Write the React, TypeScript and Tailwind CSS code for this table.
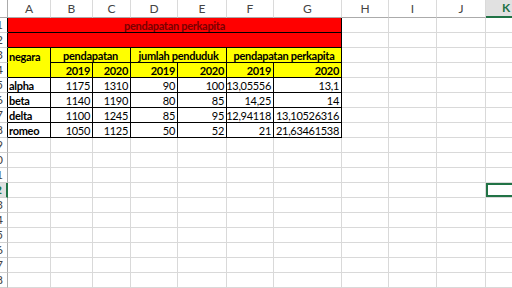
import React from "react";

type C = { t?: string; span?: 1 | 2 | 7; cls: string };

const G = "border-r border-b border-[#d9d9d9] bg-white";
const K = "border-r border-b border-black";
const Y = "bg-[#ffff00]";

function tableRow(r: number): C[] {
  if (r === 1)
    return [{ t: "pendapatan perkapita", span: 7, cls: `${K} bg-[#ff0000] justify-center font-bold text-[#7a0000]` }];
  if (r === 2) return [{ span: 7, cls: `${K} bg-[#ff0000]` }];
  if (r === 3)
    return [
      { t: "negara", cls: `border-r border-black ${Y} justify-start pl-[1px] font-bold` },
      { t: "pendapatan", span: 2, cls: `${K} ${Y} justify-center font-bold` },
      { t: "jumlah penduduk", span: 2, cls: `${K} ${Y} justify-center font-bold` },
      { t: "pendapatan perkapita", span: 2, cls: `${K} ${Y} justify-center font-bold` },
    ];
  if (r === 4)
    return [
      { cls: `${K} ${Y}` },
      ...["2019", "2020", "2019", "2020", "2019", "2020"].map((t) => ({
        t,
        cls: `${K} ${Y} justify-end pr-[2px] font-bold`,
      })),
    ];
  const data: string[][] = [
    ["alpha", "1175", "1310", "90", "100", "13,05556", "13,1"],
    ["beta", "1140", "1190", "80", "85", "14,25", "14"],
    ["delta", "1100", "1245", "85", "95", "12,94118", "13,10526316"],
    ["romeo", "1050", "1125", "50", "52", "21", "21,63461538"],
  ];
  const d = data[r - 5];
  return d.map((t, i) => ({
    t,
    cls:
      i === 0
        ? `${K} bg-white justify-start pl-[1px] font-bold`
        : `${K} bg-white justify-end pr-[2px]`,
  }));
}

export default function App() {
  const cols = ["A", "B", "C", "D", "E", "F", "G", "H", "I", "J", "K"];
  const rows = Array.from({ length: 18 }, (_, i) => i + 1);
  return (
    <div
      className="w-[512px] h-[288px] overflow-hidden bg-white text-[11px] text-black"
      style={{ fontFamily: "Lato, 'Noto Sans', sans-serif" }}
    >
      <div className="grid w-[526px] grid-cols-[8px_43px_42px_38px_47px_49px_47px_68px_47px_48px_49px_40px] grid-rows-[18px_repeat(18,15px)]">
        <div className="border-r border-b border-[#ababab] bg-white" />
        {cols.map((c) =>
          c === "K" ? (
            <div
              key={c}
              className="flex items-center justify-center border-b-2 border-[#217346] bg-[#e1e1e1] font-bold text-[#217346] text-[12px]"
            >
              {c}
            </div>
          ) : (
            <div
              key={c}
              className="flex items-center justify-center border-r border-b border-r-[#dadada] border-b-[#ababab] bg-white text-[#444444] text-[12px]"
            >
              {c}
            </div>
          )
        )}
        {rows.map((r) => {
          const sel = r === 12;
          const inTable = r <= 8;
          const hdrCls = sel
            ? "border-r-2 border-b border-r-[#217346] border-b-[#d0d0d0] bg-[#e1e1e1] text-[#217346] font-bold"
            : inTable
            ? "border-r border-b border-r-black border-b-[#d0d0d0] bg-white text-[#444444]"
            : "border-r border-b border-r-[#ababab] border-b-[#d0d0d0] bg-white text-[#444444]";
          const cells: React.ReactNode[] = [];
          cells.push(
            <div
              key={`h${r}`}
              className={`flex items-center justify-end overflow-hidden whitespace-nowrap pr-[4px] text-[12px] ${hdrCls}`}
            >
              {r}
            </div>
          );
          if (inTable) {
            tableRow(r).forEach((c, i) =>
              cells.push(
                <div
                  key={`c${r}-${i}`}
                  className={`flex items-end overflow-hidden whitespace-nowrap leading-[13px] tracking-[-0.3px] ${
                    c.span === 7 ? "col-span-7" : c.span === 2 ? "col-span-2" : ""
                  } ${c.cls}`}
                >
                  {c.t}
                </div>
              )
            );
            ["H", "I", "J", "K"].forEach((c) =>
              cells.push(<div key={`e${r}${c}`} className={G} />)
            );
          } else {
            cols.forEach((c) =>
              cells.push(
                <div
                  key={`e${r}${c}`}
                  className={
                    sel && c === "K"
                      ? `${G} shadow-[inset_0_0_0_2px_#217346]`
                      : G
                  }
                />
              )
            );
          }
          return <React.Fragment key={r}>{cells}</React.Fragment>;
        })}
      </div>
    </div>
  );
}
